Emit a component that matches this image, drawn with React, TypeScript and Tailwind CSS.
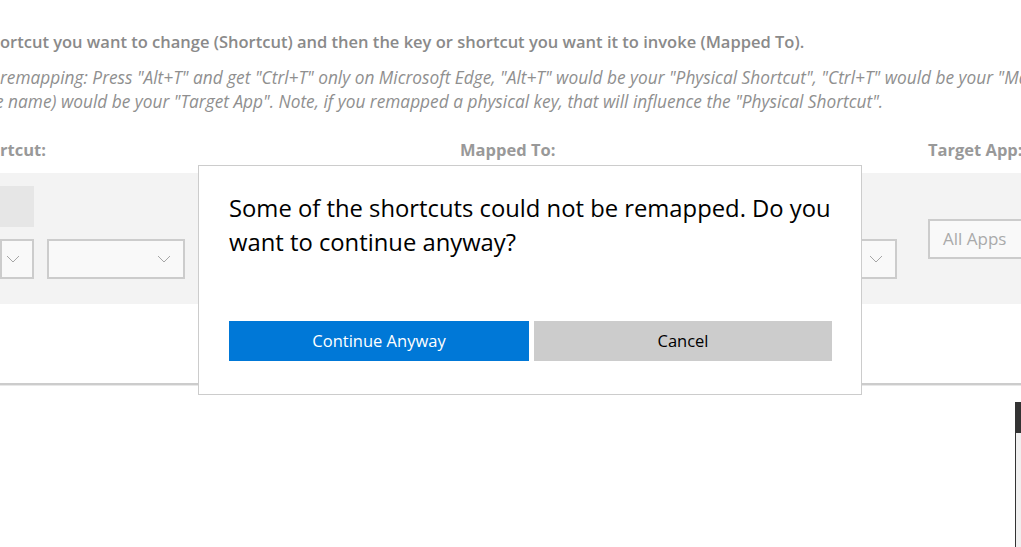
import React from 'react';

const Chevron = () => (
  <svg width="14" height="8" viewBox="0 0 14 8" className="shrink-0">
    <polyline points="1,1 7,7 13,1" fill="none" stroke="#a6a6a6" strokeWidth="1" />
  </svg>
);

const Dropdown = ({ w }: { w: string }) => (
  <div className={`${w} shrink-0 h-[40px] border-2 border-[#cccccc] bg-[#f9f9f9] flex items-center justify-end pr-[12px]`}>
    <Chevron />
  </div>
);

const App = () => {
  return (
    <div className="relative w-[1021px] h-[547px] overflow-hidden bg-white font-['Segoe_UI','Open_Sans',sans-serif]">
      {/* background page */}
      <div className="pt-[30px] whitespace-nowrap">
        <p className="text-[16.5px] leading-[24px] font-semibold text-[#8a8a8a]">
          ortcut you want to change (Shortcut) and then the key or shortcut you want it to invoke (Mapped To).
        </p>
        <div className="mt-[12px] text-[17.3px] leading-[24px] italic text-[#8f8f8f] -ml-[5px]">
          <p className="pl-[5px]">
            remapping: Press "Alt+T" and get "Ctrl+T" only on Microsoft Edge, "Alt+T" would be your "Physical Shortcut", "Ctrl+T" would be your "Mapped Shortcut"
          </p>
          <p>e name) would be your "Target App". Note, if you remapped a physical key, that will influence the "Physical Shortcut".</p>
        </div>

        <div className="mt-[24px] flex text-[16.5px] leading-[24px] font-bold text-[#999999]">
          <div className="w-[460px] shrink-0">rtcut:</div>
          <div className="w-[468px] shrink-0">Mapped To:</div>
          <div className="shrink-0">Target App:</div>
        </div>

        <div className="mt-[11px] h-[131px] bg-[#f3f3f3] flex">
          <div className="w-[460px] shrink-0 pt-[13px] flex flex-col">
            <div className="w-[34px] h-[41px] bg-[#e6e6e6]" />
            <div className="mt-[12px] flex gap-[13px]">
              <Dropdown w="w-[34px]" />
              <Dropdown w="w-[138px]" />
            </div>
          </div>
          <div className="w-[468px] shrink-0 pt-[66px] flex justify-end gap-[13px] pr-[31px]">
            <Dropdown w="w-[138px]" />
            <Dropdown w="w-[138px]" />
          </div>
          <div className="shrink-0 pt-[46px]">
            <div className="w-[140px] h-[40px] border-2 border-[#cccccc] bg-[#f9f9f9] flex items-center px-[13px] text-[17px] text-[#aaaaaa]">
              All Apps
            </div>
          </div>
        </div>

        <div className="mt-[79px] h-[2px] bg-[#cccccc]" />
        <div className="h-[1px] bg-[#e8e8e8]" />
      </div>

      {/* scrollbar */}
      <div className="absolute right-0 top-[402px] bottom-0 w-[6px] flex flex-col">
        <div className="h-[31px] bg-[#333333]" />
        <div className="flex-1 border-l border-[#333333] bg-[#f0f0f0]" />
      </div>

      {/* dialog */}
      <div className="absolute left-[198px] top-[165px] w-[664px] h-[230px] border border-[#cccccc] bg-white pl-[30px] pr-[12px] pt-[25px]">
        <p className="text-[23.8px] leading-[34px] text-black">
          Some of the shortcuts could not be remapped. Do you want to continue anyway?
        </p>
        <div className="mt-[62px] flex gap-[5px]">
          <button className="w-[300px] h-[40px] bg-[#0078d7] text-white text-[16.5px]">Continue Anyway</button>
          <button className="w-[298px] h-[40px] bg-[#cccccc] text-black text-[16.5px]">Cancel</button>
        </div>
      </div>
    </div>
  );
};

export default App;
